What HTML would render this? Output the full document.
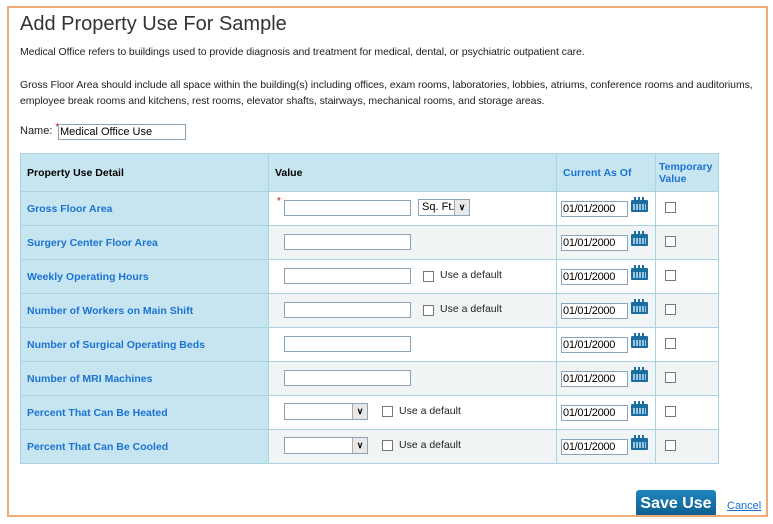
<!DOCTYPE html>
<html><head><style>
body{margin:0;width:773px;height:524px;background:#fff;font-family:"Liberation Sans",Arial,sans-serif;position:relative;overflow:hidden}
.frame{position:absolute;left:7px;top:6px;width:757px;height:507px;border:2px solid #eeaa77}
.a{position:absolute}
h1{position:absolute;left:20px;top:13px;margin:0;font-size:20px;font-weight:normal;color:#333}
.p{position:absolute;left:20px;font-size:10.5px;color:#222;line-height:16px;white-space:nowrap;letter-spacing:-0.07px}
table{position:absolute;left:20px;top:153px;border-collapse:collapse;width:699px;font-size:10.5px;table-layout:fixed}
td,th{border:1px solid #a9d2e2;padding:0;position:relative}
th{background:#c7e5f1;text-align:left;padding-left:6px;height:37px;font-weight:bold}
td.l{background:#c7e5f1;color:#1a73d0;font-weight:bold;padding-left:6px;height:33px}
tr.w td.v{background:#fff}tr.g td.v{background:#f1f4f5}
.in{position:absolute;border:1px solid #8aa3b8;background:#fff;height:14px;box-sizing:content-box}
.cb{position:absolute;width:9px;height:9px;border:1px solid #777;background:#fff}
.cal{position:absolute;width:17px;height:12px;background:#1d6ea0;border-radius:1px}
.cal::after{content:"";position:absolute;left:2px;top:4px;width:13px;height:6px;background:repeating-linear-gradient(90deg,#9cc7e3 0 2px,transparent 2px 3px)}
.cal::before{content:"";position:absolute;left:3px;top:-3px;width:11px;height:3px;background:repeating-linear-gradient(90deg,#1d6ea0 0 2px,transparent 2px 4px)}
.sel{position:absolute;width:82px;height:15px;border:1px solid #8aa3b8;background:#fff}
.sel b{position:absolute;right:0;top:0;width:14px;height:15px;background:#e8e8e8;border-left:1px solid #aaa;font-size:9px;text-align:center;line-height:15px}
.t{position:absolute;font-size:10.5px;color:#222}
.d{font-size:11px;line-height:15px;padding-left:1px;letter-spacing:-0.3px}
</style></head><body>
<div class="frame"></div>
<h1>Add Property Use For Sample</h1>
<div class="p" style="top:44px">Medical Office refers to buildings used to provide diagnosis and treatment for medical, dental, or psychiatric outpatient care.</div>
<div class="p" style="top:77px">Gross Floor Area should include all space within the building(s) including offices, exam rooms, laboratories, lobbies, atriums, conference rooms and auditoriums,<br>employee break rooms and kitchens, rest rooms, elevator shafts, stairways, mechanical rooms, and storage areas.</div>
<div class="t" style="left:20px;top:125px;font-size:11px">Name:<span style="color:#d00;font-size:10px;position:relative;top:-4px;left:3px">*</span></div>
<div class="in" style="left:58px;top:124px;width:125px;font-size:11px;line-height:14px;padding-left:1px">Medical Office Use</div>
<table>
<tr><th style="width:241px">Property Use Detail</th><th style="width:281px">Value</th><th style="width:92px;color:#1a73d0">Current As Of</th><th style="color:#1a73d0;padding-left:3px">Temporary<br>Value</th></tr>
<tr class="w"><td class="l">Gross Floor Area</td><td class="v"></td><td class="v"></td><td class="v"></td></tr>
<tr class="g"><td class="l">Surgery Center Floor Area</td><td class="v"></td><td class="v"></td><td class="v"></td></tr>
<tr class="w"><td class="l">Weekly Operating Hours</td><td class="v"></td><td class="v"></td><td class="v"></td></tr>
<tr class="g"><td class="l">Number of Workers on Main Shift</td><td class="v"></td><td class="v"></td><td class="v"></td></tr>
<tr class="w"><td class="l">Number of Surgical Operating Beds</td><td class="v"></td><td class="v"></td><td class="v"></td></tr>
<tr class="g"><td class="l">Number of MRI Machines</td><td class="v"></td><td class="v"></td><td class="v"></td></tr>
<tr class="w"><td class="l">Percent That Can Be Heated</td><td class="v"></td><td class="v"></td><td class="v"></td></tr>
<tr class="g"><td class="l">Percent That Can Be Cooled</td><td class="v"></td><td class="v"></td><td class="v"></td></tr>
</table>
<div class="t" style="left:277px;top:196px;color:#d00;font-size:10px">*</div>
<div class="in" style="left:284px;top:200px;width:125px"></div>
<div class="sel" style="left:418px;top:199px;width:50px;font-size:11px;line-height:15px">&nbsp;Sq. Ft.<b>&#8744;</b></div>
<div class="in" style="left:284px;top:234px;width:125px"></div>
<div class="in" style="left:284px;top:268px;width:125px"></div><div class="cb" style="left:423px;top:271px"></div><div class="t" style="left:440px;top:269px">Use a default</div>
<div class="in" style="left:284px;top:302px;width:125px"></div><div class="cb" style="left:423px;top:305px"></div><div class="t" style="left:440px;top:303px">Use a default</div>
<div class="in" style="left:284px;top:336px;width:125px"></div>
<div class="in" style="left:284px;top:370px;width:125px"></div>
<div class="sel" style="left:284px;top:403px"><b>&#8744;</b></div><div class="cb" style="left:382px;top:406px"></div><div class="t" style="left:399px;top:405px">Use a default</div>
<div class="sel" style="left:284px;top:437px"><b>&#8744;</b></div><div class="cb" style="left:382px;top:440px"></div><div class="t" style="left:399px;top:439px">Use a default</div>
<div class="in d" style="left:561px;top:201px;width:64px">01/01/2000</div><div class="cal" style="left:631px;top:200px"></div><div class="cb" style="left:665px;top:202px"></div>
<div class="in d" style="left:561px;top:235px;width:64px">01/01/2000</div><div class="cal" style="left:631px;top:234px"></div><div class="cb" style="left:665px;top:236px"></div>
<div class="in d" style="left:561px;top:269px;width:64px">01/01/2000</div><div class="cal" style="left:631px;top:268px"></div><div class="cb" style="left:665px;top:270px"></div>
<div class="in d" style="left:561px;top:303px;width:64px">01/01/2000</div><div class="cal" style="left:631px;top:302px"></div><div class="cb" style="left:665px;top:304px"></div>
<div class="in d" style="left:561px;top:337px;width:64px">01/01/2000</div><div class="cal" style="left:631px;top:336px"></div><div class="cb" style="left:665px;top:338px"></div>
<div class="in d" style="left:561px;top:371px;width:64px">01/01/2000</div><div class="cal" style="left:631px;top:370px"></div><div class="cb" style="left:665px;top:372px"></div>
<div class="in d" style="left:561px;top:405px;width:64px">01/01/2000</div><div class="cal" style="left:631px;top:404px"></div><div class="cb" style="left:665px;top:406px"></div>
<div class="in d" style="left:561px;top:439px;width:64px">01/01/2000</div><div class="cal" style="left:631px;top:438px"></div><div class="cb" style="left:665px;top:440px"></div>
<div class="a" style="left:636px;top:490px;width:80px;height:25px;background:linear-gradient(#1f86c0,#0f5f8e);border-radius:3px 3px 0 0;color:#fff;font-weight:bold;font-size:16px;text-align:center;line-height:28px">Save Use</div>
<div class="a" style="left:727px;top:500px;font-size:11px;color:#1a73d0;text-decoration:underline">Cancel</div>
</body></html>
